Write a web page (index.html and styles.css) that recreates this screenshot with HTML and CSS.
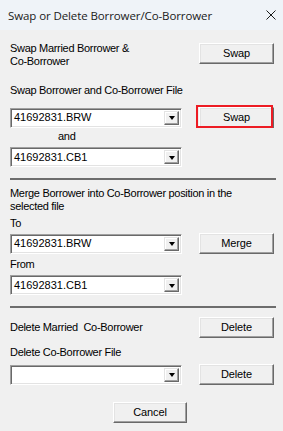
FILE: index.html
```html
<!DOCTYPE html>
<html>
<head>
<meta charset="utf-8">
<link rel="stylesheet" href="styles.css">
</head>
<body>
<div class="window">
  <div class="titlebar">
    <span class="title">Swap or Delete Borrower/Co-Borrower</span>
    <svg class="close" width="10" height="10" viewBox="0 0 10 10"><path d="M0.5 0.5 L9.5 9.5 M9.5 0.5 L0.5 9.5" stroke="#1a1a1a" stroke-width="1" fill="none"/></svg>
  </div>
  <div class="content">
    <div class="row row1">
      <div class="text">Swap Married Borrower &amp;<br>Co-Borrower</div>
      <div class="btn btn-top">Swap</div>
    </div>
    <div class="label l-swapfile">Swap Borrower and Co-Borrower File</div>
    <div class="row row-combo r-swap">
      <div class="combo"><span class="val">41692831.BRW</span><span class="drop"><i class="arrow"></i></span></div>
      <div class="btn">Swap</div>
      <div class="highlight"></div>
    </div>
    <div class="label l-and">and</div>
    <div class="combo c-and"><span class="val">41692831.CB1</span><span class="drop"><i class="arrow"></i></span></div>
    <div class="sep s1"></div>
    <div class="label l-merge">Merge Borrower into Co-Borrower position in the<br>selected file</div>
    <div class="label l-to">To</div>
    <div class="row row-combo r-merge">
      <div class="combo"><span class="val">41692831.BRW</span><span class="drop"><i class="arrow"></i></span></div>
      <div class="btn">Merge</div>
    </div>
    <div class="label l-from">From</div>
    <div class="combo c-from"><span class="val">41692831.CB1</span><span class="drop"><i class="arrow"></i></span></div>
    <div class="sep s2"></div>
    <div class="row r-delmarried">
      <div class="text">Delete Married&nbsp; Co-Borrower</div>
      <div class="btn">Delete</div>
    </div>
    <div class="label l-delfile">Delete Co-Borrower File</div>
    <div class="row row-combo r-delfile">
      <div class="combo"><span class="val"></span><span class="drop"><i class="arrow"></i></span></div>
      <div class="btn">Delete</div>
    </div>
    <div class="btn cancel">Cancel</div>
  </div>
</div>
</body>
</html>
```
FILE: styles.css
```css
html, body {
  margin: 0;
  padding: 0;
}
body {
  width: 283px;
  height: 431px;
  overflow: hidden;
  background: #f0f0f0;
}
.window {
  width: 283px;
  height: 431px;
  background: #f0f0f0;
  font-family: "Liberation Sans", Arial, sans-serif;
  font-size: 11px;
  line-height: 13px;
  color: #000;
}
.titlebar {
  height: 30px;
  background: #eff3f8;
  display: flex;
  align-items: center;
  justify-content: space-between;
  padding: 0 7px 0 8px;
  box-sizing: border-box;
}
.title {
  font-family: "Open Sans", "Noto Sans", sans-serif;
  font-size: 11.5px;
  color: #1a1a1a;
  letter-spacing: -0.1px;
}
.close {
  display: block;
}
.content {
  padding: 0 9px 0 10px;
  position: relative;
}
.row {
  display: flex;
  justify-content: space-between;
  position: relative;
}
.text, .label {
  letter-spacing: -0.3px;
  white-space: nowrap;
}
.row1 {
  margin-top: 12px;
  align-items: flex-start;
}
.btn {
  width: 75px;
  height: 21px;
  box-sizing: border-box;
  background: #f0f0f0;
  border-style: solid;
  border-width: 1px;
  border-color: #ffffff #696969 #696969 #ffffff;
  box-shadow: inset -1px -1px 0 #a0a0a0, inset 1px 1px 0 #e3e3e3;
  display: flex;
  align-items: center;
  justify-content: center;
  font-size: 11px;
  letter-spacing: -0.1px;
}
.btn-top {
  margin-top: 1px;
}
.l-swapfile { margin-top: 16px; }
.row-combo {
  align-items: center;
}
.r-swap { margin-top: 10px; height: 21px; }
.combo {
  width: 172px;
  height: 20px;
  box-sizing: border-box;
  background: #fff;
  border-style: solid;
  border-width: 1px;
  border-color: #a0a0a0 #ffffff #ffffff #a0a0a0;
  box-shadow: inset 1px 1px 0 #696969, inset -1px -1px 0 #e3e3e3;
  display: flex;
  align-items: center;
  justify-content: space-between;
  padding: 2px 2px 2px 3px;
}
.val {
  font-size: 11px;
  line-height: 13px;
}
.drop {
  width: 15px;
  height: 14px;
  box-sizing: border-box;
  background: #f0f0f0;
  border-style: solid;
  border-width: 1px;
  border-color: #e3e3e3 #696969 #696969 #e3e3e3;
  box-shadow: inset -1px -1px 0 #a0a0a0, inset 1px 1px 0 #ffffff;
  display: flex;
  align-items: center;
  justify-content: center;
}
.arrow {
  width: 0;
  height: 0;
  border-left: 3.5px solid transparent;
  border-right: 3.5px solid transparent;
  border-top: 4px solid #000;
  margin-top: 1px;
}
.highlight {
  position: absolute;
  left: 186px;
  top: -2px;
  width: 77px;
  height: 23px;
  box-sizing: border-box;
  border: 2px solid #ed1c24;
  pointer-events: none;
}
.l-and {
  margin-top: 2px;
  padding-left: 48px;
}
.c-and { margin-top: 4px; }
.sep {
  height: 2px;
  width: 266px;
  background: #6d6d6d;
}
.s1 { margin-top: 11px; }
.l-merge { margin-top: 7px; }
.l-to { margin-top: 4px; }
.r-merge { margin-top: 3px; }
.l-from { margin-top: 4px; }
.c-from { margin-top: 4px; }
.s2 { margin-top: 11px; }
.r-delmarried {
  margin-top: 9px;
  align-items: center;
}
.l-delfile { margin-top: 8px; }
.r-delfile { margin-top: 5px; }
.cancel {
  margin-top: 17px;
  margin-left: 103px;
  width: 74px;
}
```
